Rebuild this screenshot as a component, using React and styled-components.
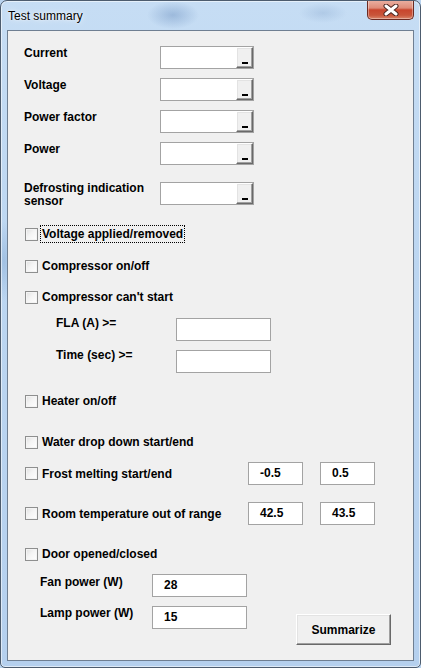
import React from 'react';
import styled, { createGlobalStyle, css } from 'styled-components';

const GlobalStyle = createGlobalStyle`
  html, body {
    margin: 0;
    padding: 0;
    overflow: hidden;
    background: #b9d3ef;
  }
  * {
    box-sizing: border-box;
  }
`;

const Window = styled.div`
  width: 421px;
  height: 668px;
  display: flex;
  flex-direction: column;
  border: 1px solid #4d5c6e;
  border-radius: 7px 7px 5px 5px;
  background:
    radial-gradient(ellipse 26px 14px at 172px 14px, rgba(80, 120, 175, 0.35), transparent),
    radial-gradient(ellipse 24px 10px at 322px 12px, rgba(110, 145, 190, 0.25), transparent),
    radial-gradient(ellipse 10px 40px at 3px 260px, rgba(120, 160, 205, 0.4), transparent),
    linear-gradient(180deg, #c6ddf4 0%, #bcd6f1 40%, #b5d0ee 100%);
  box-shadow: inset 0 0 0 1px rgba(255, 255, 255, 0.55);
  font-family: "Liberation Sans", Arial, sans-serif;
  overflow: hidden;
`;

const TitleBar = styled.div`
  height: 29px;
  flex: 0 0 29px;
  display: flex;
  align-items: flex-start;
  padding-left: 7px;
`;

const Title = styled.span`
  font-size: 12px;
  line-height: 14px;
  padding-top: 8px;
  color: #000;
  text-shadow: 0 0 6px rgba(255, 255, 255, 0.9), 0 0 2px rgba(255, 255, 255, 0.9);
`;

const CloseButton = styled.div`
  margin-left: auto;
  margin-right: 6px;
  margin-top: -1px;
  width: 47px;
  height: 20px;
  display: flex;
  align-items: center;
  justify-content: center;
  border: 1px solid #6b2a22;
  border-top: none;
  border-radius: 0 0 5px 5px;
  background: linear-gradient(180deg, #eab2a4 0%, #de8b78 42%, #c8452d 52%, #c9553a 80%, #d9866b 100%);
  box-shadow: inset 0 0 0 1px rgba(255, 255, 255, 0.35);
`;

const Client = styled.div`
  flex: 1;
  margin: 0 6px 6px 6px;
  border: 1px solid #6f7f92;
  background: #f0f0f0;
  padding: 15px 16px 0 16px;
  display: flex;
  flex-direction: column;
`;

const Row = styled.div`
  display: flex;
  align-items: ${p => (p.$center ? 'center' : 'flex-start')};
  margin-top: ${p => p.$mt || 0}px;
  margin-left: ${p => p.$ml || 0}px;
  min-height: ${p => p.$h || 0}px;
`;

const boldText = css`
  font-family: "Liberation Sans", Arial, sans-serif;
  font-weight: bold;
  font-size: 12px;
  color: #000;
`;

const Label = styled.div`
  ${boldText};
  width: ${p => p.$w}px;
  flex: 0 0 ${p => p.$w}px;
  line-height: ${p => p.$lh || 14}px;
  margin-top: ${p => p.$dy || 0}px;
`;

const PickerBox = styled.div`
  width: 94px;
  height: 23px;
  border: 1px solid #a3a3a3;
  background: #fff;
  display: flex;
  justify-content: flex-end;
`;

const PickButton = styled.div`
  width: 17px;
  height: 21px;
  background: #f0f0f0;
  border-top: 1px solid #fff;
  border-left: 1px solid #fff;
  border-right: 1px solid #696969;
  border-bottom: 1px solid #696969;
  box-shadow: inset -1px -1px 0 #a0a0a0, inset 1px 1px 0 #e3e3e3;
  display: flex;
  align-items: flex-end;
  justify-content: center;
  padding-bottom: 3px;
  padding-left: 1px;
`;

const Dash = styled.span`
  display: block;
  width: 6px;
  height: 2px;
  background: #000;
`;

const ValueBox = styled.div`
  ${boldText};
  width: ${p => p.$w}px;
  height: 23px;
  border: 1px solid #a3a3a3;
  background: #fff;
  padding-left: 11px;
  line-height: 20px;
  margin-left: ${p => p.$ml || 0}px;
`;

const CheckBox = styled.span`
  width: 13px;
  height: 13px;
  flex: 0 0 13px;
  margin-left: 1px;
  border: 1px solid #8e8f8f;
  background: linear-gradient(135deg, #e0e0e0 0%, #f4f4f4 45%, #fff 100%);
  box-shadow: inset 0 0 0 1px #f4f4f4;
`;

const CheckLabel = styled.span`
  ${boldText};
  line-height: 14px;
  margin-left: 4px;
  ${p => p.$w && css`
    width: ${p.$w}px;
    flex: 0 0 ${p.$w}px;
  `}
  ${p => p.$focus && css`
    margin-left: 2px;
    padding: 1px 1px;
    border: 1px dotted #000;
  `}
`;

const Summarize = styled.button`
  ${boldText};
  width: 95px;
  height: 31px;
  margin-left: 49px;
  margin-top: 8px;
  padding: 0;
  background: #f0f0f0;
  border-top: 1px solid #fff;
  border-left: 1px solid #fff;
  border-right: 1px solid #696969;
  border-bottom: 1px solid #696969;
  box-shadow: inset -1px -1px 0 #a0a0a0, inset 1px 1px 0 #e3e3e3;
`;

const CloseIcon = () => (
  <svg width="16" height="12" viewBox="0 0 16 12">
    <path d="M3 2 L13 10 M13 2 L3 10" stroke="#4a2520" strokeWidth="5" strokeLinecap="round" />
    <path d="M3 2 L13 10 M13 2 L3 10" stroke="#ffffff" strokeWidth="3" strokeLinecap="round" />
  </svg>
);

const Field = ({ label, mt, lh, h }) => (
  <Row $mt={mt} $h={h}>
    <Label $w={136} $lh={lh}>{label}</Label>
    <PickerBox>
      <PickButton><Dash /></PickButton>
    </PickerBox>
  </Row>
);

const Check = ({ label, mt, focus, w, h = 18, children }) => (
  <Row $center $mt={mt} $h={h}>
    <CheckBox />
    <CheckLabel $focus={focus} $w={w}>{label}</CheckLabel>
    {children}
  </Row>
);

export default function App() {
  return (
    <>
      <GlobalStyle />
      <Window>
        <TitleBar>
          <Title>Test summary</Title>
          <CloseButton><CloseIcon /></CloseButton>
        </TitleBar>
        <Client>
          <Field label="Current" />
          <Field label="Voltage" mt={9} />
          <Field label="Power factor" mt={9} />
          <Field label="Power" mt={9} />
          <Field
            label={<>Defrosting indication<br />sensor</>}
            mt={17}
            lh={13}
            h={26}
          />

          <Check label="Voltage applied/removed" mt={17} focus />
          <Check label="Compressor on/off" mt={14} />
          <Check label="Compressor can't start" mt={13} />

          <Row $mt={12} $ml={32}>
            <Label $w={120} $dy={-2}>FLA (A) &gt;=</Label>
            <ValueBox $w={95} />
          </Row>
          <Row $mt={9} $ml={32}>
            <Label $w={120} $dy={-2}>Time (sec) &gt;=</Label>
            <ValueBox $w={95} />
          </Row>

          <Check label="Heater on/off" mt={19} />
          <Check label="Water drop down start/end" mt={23} />
          <Check label="Frost melting start/end" mt={11} w={206} h={23}>
            <ValueBox $w={55}>-0.5</ValueBox>
            <ValueBox $w={55} $ml={17}>0.5</ValueBox>
          </Check>
          <Check label="Room temperature out of range" mt={17} w={206} h={23}>
            <ValueBox $w={55}>42.5</ValueBox>
            <ValueBox $w={55} $ml={17}>43.5</ValueBox>
          </Check>
          <Check label="Door opened/closed" mt={20} />

          <Row $mt={11} $ml={16}>
            <Label $w={112} $dy={1}>Fan power (W)</Label>
            <ValueBox $w={95}>28</ValueBox>
          </Row>
          <Row $mt={9} $ml={16}>
            <Label $w={112}>Lamp power (W)</Label>
            <ValueBox $w={95}>15</ValueBox>
            <Summarize>Summarize</Summarize>
          </Row>
        </Client>
      </Window>
    </>
  );
}
